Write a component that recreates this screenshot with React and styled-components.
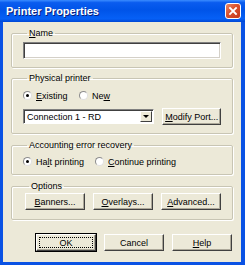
import React from 'react';
import styled, { createGlobalStyle } from 'styled-components';

const Global = createGlobalStyle`
    html, body {
        margin: 0;
        padding: 0;
        background: #ffffff;
    }
    body {
        font-family: "Liberation Sans", Arial, sans-serif;
        font-size: 9px;
        color: #000000;
    }
`

const Window = styled.div`
    width: 245px;
    height: 265px;
    display: flex;
    flex-direction: column;
    background: #0a52e4;
    box-sizing: border-box;
`

const TitleBar = styled.div`
    height: 22px;
    flex: none;
    display: flex;
    align-items: center;
    justify-content: space-between;
    padding: 0 4px 0 6px;
    background: linear-gradient(to bottom, #3b8cff 0%, #0a5cef 12%, #0054e8 45%, #0660f6 85%, #0047d4 100%);
`

const Title = styled.span`
    color: #ffffff;
    font-weight: bold;
    font-size: 11px;
    text-shadow: 1px 1px #0a1e7a;
    letter-spacing: 0;
`

const CloseButton = styled.div`
    width: 16px;
    height: 16px;
    box-sizing: border-box;
    border: 1px solid #ffffff;
    border-radius: 3px;
    background: linear-gradient(135deg, #e9896a 0%, #d9502c 45%, #c4381a 100%);
    display: flex;
    align-items: center;
    justify-content: center;
`

const Body = styled.div`
    flex: 1;
    margin: 0 4px 3px 3px;
    background: #ece9d8;
    padding: 5px 8px 0 8px;
    display: flex;
    flex-direction: column;
`

const Group = styled.fieldset`
    margin: 0 0 ${p => p.gap || 0}px 0;
    padding: ${p => p.pad || '0 11px 8px 11px'};
    border: 1px solid #c8c5b4;
    border-radius: 2px;
    box-shadow: inset 1px 1px #ffffff, 1px 1px #ffffff;
    min-width: 0;
`

const Legend = styled.legend`
    padding: 0 2px;
    margin-left: 4px;
    line-height: 12px;
    font-size: 9px;
`

const TextBox = styled.div`
    margin-top: 3px;
    height: 17px;
    box-sizing: border-box;
    background: #ffffff;
    border-top: 1px solid #808080;
    border-left: 1px solid #808080;
    border-right: 1px solid #ffffff;
    border-bottom: 1px solid #ffffff;
    box-shadow: inset 1px 1px #404040, inset -1px -1px #d4d0c8;
`

const RadioRow = styled.div`
    display: flex;
    align-items: center;
    height: 13px;
    margin-top: ${p => p.top || 0}px;
`

const RadioItem = styled.label`
    display: flex;
    align-items: center;
    width: ${p => p.w ? `${p.w}px` : 'auto'};
`

const RadioCircle = styled.span`
    width: 9px;
    height: 9px;
    box-sizing: border-box;
    border-radius: 50%;
    background: #ffffff;
    border: 1px solid #8c8c8c;
    border-right-color: #e0e0e0;
    border-bottom-color: #e0e0e0;
    margin-right: 4px;
    display: flex;
    align-items: center;
    justify-content: center;
    flex: none;

    &::after {
        content: '';
        width: 3px;
        height: 3px;
        border-radius: 50%;
        background: ${p => p.checked ? '#000000' : 'transparent'};
    }
`

const Row = styled.div`
    display: flex;
    align-items: center;
    justify-content: ${p => p.justify || 'flex-start'};
    gap: ${p => p.gap || 8}px;
    margin-top: ${p => p.top || 0}px;
`

const Combo = styled.div`
    width: 132px;
    height: 15px;
    box-sizing: border-box;
    background: #ffffff;
    border-top: 1px solid #808080;
    border-left: 1px solid #808080;
    border-right: 1px solid #ffffff;
    border-bottom: 1px solid #ffffff;
    box-shadow: inset 1px 1px #404040;
    display: flex;
    align-items: center;
    padding-left: 3px;
`

const ComboText = styled.span`
    flex: 1;
    white-space: nowrap;
`

const ComboArrow = styled.div`
    width: 12px;
    height: 11px;
    box-sizing: border-box;
    background: #ece9d8;
    border-top: 1px solid #ffffff;
    border-left: 1px solid #ffffff;
    border-right: 1px solid #404040;
    border-bottom: 1px solid #404040;
    margin-right: 1px;
    display: flex;
    align-items: center;
    justify-content: center;

    &::after {
        content: '';
        border-left: 3px solid transparent;
        border-right: 3px solid transparent;
        border-top: 3px solid #000000;
    }
`

const Button = styled.button`
    width: ${p => p.w || 60}px;
    height: ${p => p.h || 17}px;
    padding: 0;
    margin: 0;
    font-family: inherit;
    font-size: 9px;
    color: #000000;
    background: #ece9d8;
    box-sizing: border-box;
    border-top: 1px solid #ffffff;
    border-left: 1px solid #ffffff;
    border-right: 1px solid #404040;
    border-bottom: 1px solid #404040;
    box-shadow: inset -1px -1px #aca899;
    position: relative;
    ${p => p.default && `
        outline: 1px solid #000000;
        outline-offset: 0;
        &::after {
            content: '';
            position: absolute;
            inset: 2px;
            border: 1px dotted #000000;
        }
    `}
`

const Key = styled.span`
    text-decoration: underline;
`

const Footer = styled.div`
    display: flex;
    justify-content: flex-end;
    gap: 8px;
    margin-top: 14px;
    padding-right: 1px;
`

export default function App() {
    return (
        <>
            <Global />
            <Window>
                <TitleBar>
                    <Title>Printer Properties</Title>
                    <CloseButton>
                        <svg width="10" height="10" viewBox="0 0 10 10">
                            <path d="M2 2 L8 8 M8 2 L2 8" stroke="#ffffff" strokeWidth="1.8" strokeLinecap="square" />
                        </svg>
                    </CloseButton>
                </TitleBar>
                <Body>
                    <Group gap={4}>
                        <Legend><Key>N</Key>ame</Legend>
                        <TextBox />
                    </Group>
                    <Group gap={5}>
                        <Legend>Physical printer</Legend>
                        <RadioRow top={5}>
                            <RadioItem w={56}><RadioCircle checked /><Key>E</Key>xisting</RadioItem>
                            <RadioItem><RadioCircle />Ne<Key>w</Key></RadioItem>
                        </RadioRow>
                        <Row top={6}>
                            <Combo>
                                <ComboText>Connection 1 - RD</ComboText>
                                <ComboArrow />
                            </Combo>
                            <Button w={59}><Key>M</Key>odify Port...</Button>
                        </Row>
                    </Group>
                    <Group gap={5} pad="0 11px 6px 11px">
                        <Legend>Accounting error recovery</Legend>
                        <RadioRow top={4}>
                            <RadioItem w={72}><RadioCircle checked />Ha<Key>l</Key>t printing</RadioItem>
                            <RadioItem><RadioCircle /><Key>C</Key>ontinue printing</RadioItem>
                        </RadioRow>
                    </Group>
                    <Group pad="0 11px 9px 13px">
                        <Legend>Options</Legend>
                        <Row top={1} gap={8}>
                            <Button w={60}><Key>B</Key>anners...</Button>
                            <Button w={60}><Key>O</Key>verlays...</Button>
                            <Button w={60}><Key>A</Key>dvanced...</Button>
                        </Row>
                    </Group>
                    <Footer>
                        <Button default>OK</Button>
                        <Button>Cancel</Button>
                        <Button><Key>H</Key>elp</Button>
                    </Footer>
                </Body>
            </Window>
        </>
    );
}
